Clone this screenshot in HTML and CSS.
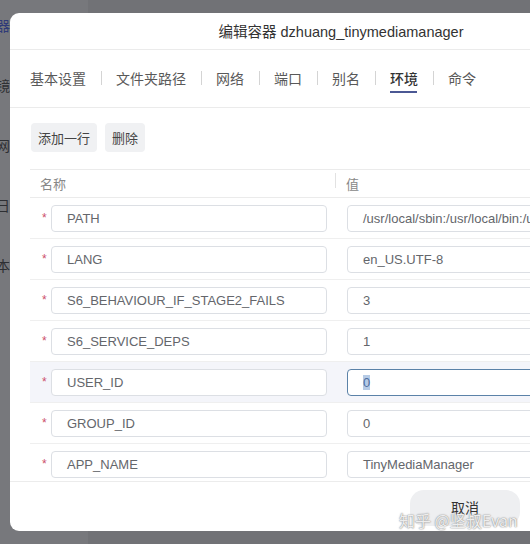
FILE: index.html
```html
<!DOCTYPE html>
<html>
<head>
<meta charset="utf-8">
<link rel="stylesheet" href="styles.css">
</head>
<body>
<div class="page">
  <div class="behind">
    <div class="behind-item blue">器</div>
    <div class="behind-item">镜</div>
    <div class="behind-item">网</div>
    <div class="behind-item">日</div>
    <div class="behind-item">本</div>
  </div>
  <div class="dialog">
    <div class="dlg-header">编辑容器 dzhuang_tinymediamanager</div>
    <div class="tabs">
      <span class="tab">基本设置</span><span class="sep"></span>
      <span class="tab">文件夹路径</span><span class="sep"></span>
      <span class="tab">网络</span><span class="sep"></span>
      <span class="tab">端口</span><span class="sep"></span>
      <span class="tab">别名</span><span class="sep"></span>
      <span class="tab active">环境</span><span class="sep"></span>
      <span class="tab">命令</span>
    </div>
    <div class="body">
      <div class="actions">
        <button class="btn">添加一行</button>
        <button class="btn">删除</button>
      </div>
      <div class="table">
        <div class="thead">
          <div class="th name-col">名称</div>
          <div class="th val-col"><span class="divider"></span>值</div>
        </div>
        <div class="row">
          <div class="name-col"><span class="star">*</span><div class="input">PATH</div></div>
          <div class="val-col"><div class="input">/usr/local/sbin:/usr/local/bin:/usr/sbin:/usr/bin:/sbin:/bin</div></div>
        </div>
        <div class="row">
          <div class="name-col"><span class="star">*</span><div class="input">LANG</div></div>
          <div class="val-col"><div class="input">en_US.UTF-8</div></div>
        </div>
        <div class="row">
          <div class="name-col"><span class="star">*</span><div class="input">S6_BEHAVIOUR_IF_STAGE2_FAILS</div></div>
          <div class="val-col"><div class="input">3</div></div>
        </div>
        <div class="row">
          <div class="name-col"><span class="star">*</span><div class="input">S6_SERVICE_DEPS</div></div>
          <div class="val-col"><div class="input">1</div></div>
        </div>
        <div class="row hover">
          <div class="name-col"><span class="star">*</span><div class="input">USER_ID</div></div>
          <div class="val-col"><div class="input focus"><span class="sel">0</span></div></div>
        </div>
        <div class="row">
          <div class="name-col"><span class="star">*</span><div class="input">GROUP_ID</div></div>
          <div class="val-col"><div class="input">0</div></div>
        </div>
        <div class="row">
          <div class="name-col"><span class="star">*</span><div class="input">APP_NAME</div></div>
          <div class="val-col"><div class="input">TinyMediaManager</div></div>
        </div>
      </div>
    </div>
    <div class="footer">
      <button class="btn-cancel">取消</button>
    </div>
  </div>
  <div class="watermark">知乎 @坚叔Evan</div>
</div>
</body>
</html>
```
FILE: styles.css
```css
* { box-sizing: border-box; }
html, body {
  margin: 0;
  padding: 0;
  width: 530px;
  height: 544px;
  overflow: hidden;
  background: #717276;
  font-family: "Liberation Sans", "Noto Sans CJK SC", sans-serif;
}
.page {
  position: relative;
  width: 530px;
  height: 544px;
  overflow: hidden;
}
.behind {
  position: absolute;
  left: 0;
  top: 0;
  width: 88px;
  height: 544px;
  background: #77787c;
  padding-top: 15px;
}
.behind-item {
  height: 60px;
  margin-left: -4px;
  font-size: 14px;
  color: #2e2f33;
  font-family: "Noto Sans CJK SC", sans-serif;
}
.behind-item.blue { color: #2f3a78; }
.dialog {
  position: absolute;
  left: 10px;
  top: 13px;
  width: 660px;
  height: 518px;
  background: #fff;
  border-radius: 9px;
  display: flex;
  flex-direction: column;
  overflow: hidden;
}
.dlg-header {
  height: 37px;
  flex: none;
  border-bottom: 1px solid #ebebeb;
  text-align: center;
  font-size: 14.5px;
  line-height: 38px;
  color: #333;
  padding-left: 2px;
}
.tabs {
  height: 58px;
  flex: none;
  display: flex;
  align-items: center;
  padding-left: 20px;
  padding-bottom: 2px;
  border-bottom: 1px solid #ebebeb;
  font-size: 14px;
  color: #595959;
  font-family: "Noto Sans CJK SC", sans-serif;
}
.tab {
  position: relative;
  line-height: 20px;
}
.tab.active {
  color: #333;
  font-weight: 500;
}
.tab.active::after {
  content: "";
  position: absolute;
  left: 0;
  right: 1px;
  bottom: -5px;
  height: 2px;
  background: #4b5894;
}
.sep {
  width: 1px;
  height: 14px;
  background: #d4d4d4;
  margin: 0 14.5px;
}
.body {
  flex: 1;
  overflow: hidden;
  padding: 15px 0 0 20px;
  border-bottom: 1px solid #ececec;
}
.actions {
  display: flex;
  gap: 8px;
  margin-left: 1px;
}
.btn {
  height: 29px;
  padding: 0 7px;
  border: none;
  border-radius: 4px;
  background: #f0f1f3;
  color: #444;
  font-size: 13px;
  font-family: "Noto Sans CJK SC", sans-serif;
}
.table {
  margin-top: 17px;
  border-top: 1px solid #ebebeb;
}
.thead {
  display: flex;
  height: 28px;
  border-bottom: 1px solid #ebebeb;
  align-items: center;
  font-size: 13px;
  color: #888;
  font-family: "Noto Sans CJK SC", sans-serif;
}
.name-col {
  width: 305px;
  flex: none;
  display: flex;
  align-items: center;
  padding: 0 8px 0 10px;
}
.val-col {
  flex: 1;
  display: flex;
  align-items: center;
  padding-left: 12px;
  position: relative;
}
.th.val-col { padding-left: 11px; }
.divider {
  position: absolute;
  left: 0;
  top: -1px;
  width: 1px;
  height: 15px;
  background: #e2e2e2;
}
.row {
  display: flex;
  height: 41px;
  align-items: center;
  border-bottom: 1px solid #efefef;
}
.row.hover { background: #f4f5fa; }
.star {
  width: 11px;
  flex: none;
  color: #cc4f6c;
  font-size: 12px;
  padding-left: 2px;
}
.input {
  flex: 1;
  height: 27px;
  border: 1px solid #dcdfe4;
  border-radius: 4px;
  background: #fff;
  padding-left: 15px;
  font-size: 13px;
  line-height: 25px;
  color: #64666b;
  white-space: nowrap;
  overflow: hidden;
}
.input.focus {
  border-color: #5b82a8;
}
.sel {
  background: #b6cbe6;
  color: #4f6ea0;
}
.footer {
  height: 49px;
  flex: none;
  display: flex;
  align-items: flex-start;
  padding: 8px 0 0 400px;
}
.btn-cancel {
  width: 110px;
  height: 36px;
  padding-bottom: 4px;
  border: none;
  border-radius: 14px;
  background: #eeeff1;
  color: #333;
  font-size: 14px;
  font-family: "Noto Sans CJK SC", sans-serif;
}
.watermark {
  position: absolute;
  left: 399px;
  top: 508px;
  font-size: 16px;
  color: rgba(255,255,255,0.85);
  text-shadow: 0 0 1px #888, 0 0 2px #999;
  font-family: "Noto Sans CJK SC", sans-serif;
}
```
